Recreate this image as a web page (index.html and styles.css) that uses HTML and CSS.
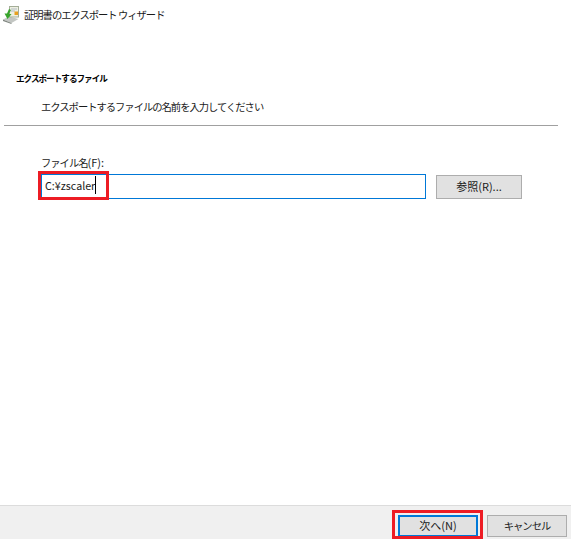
FILE: index.html
```html
<!DOCTYPE html>
<html lang="ja">
<head>
  <meta charset="UTF-8" />
  <title>証明書のエクスポート ウィザード</title>
  <link rel="stylesheet" href="styles.css">
</head>
<body>
  <div class="wizard">
    <div class="titlebar">
      <svg class="title-icon" width="16" height="18" viewBox="0 0 16 18">
        <path d="M0 13.5l6-3 9.5 2.500-7 4z" fill="#c3c6c3"/>
        <path d="M0 13.5l8.500 3.500v1L0 15z" fill="#7f857f"/>
        <rect x="6.5" y="0.5" width="9" height="10.5" fill="#eef0e2" stroke="#a4ad98"/>
        <path d="M8 3h6M8 5h4" stroke="#b4bcc4"/>
        <rect x="11.5" y="5.5" width="3.5" height="3.5" fill="#e8a020"/>
        <path d="M6 3l2 1-2 4h2.500l-4 5-3-5.500h2.500z" fill="#38a52c"/>
      </svg>
      <span>証明書のエクスポート ウィザード</span>
    </div>

    <div class="head">
      <div class="head-title">エクスポートするファイル</div>
      <div class="head-sub">エクスポートするファイルの名前を入力してください</div>
    </div>

    <div class="content">
      <label class="file-label">ファイル名<span class="latin">(F):</span></label>
      <div class="file-row">
        <div class="file-input">
          <span class="file-value">C:¥zscaler</span><span class="caret"></span>
          <div class="mark mark-input"></div>
        </div>
        <button class="btn btn-browse" type="button">参照(R)...</button>
      </div>
    </div>

    <div class="footer">
      <div class="next-wrap">
        <button class="btn btn-next" type="button">次へ(N)</button>
        <div class="mark mark-next"></div>
      </div>
      <button class="btn btn-cancel" type="button">キャンセル</button>
    </div>
  </div>
</body>
</html>
```

FILE: styles.css
```css
* {
  box-sizing: border-box;
}
body {
  margin: 0;
  background: #fff;
  font-family: "Noto Sans CJK JP", "Liberation Sans", sans-serif;
  font-size: 10.3px;
  letter-spacing: -1px;
  color: #1a1a1a;
}
.wizard {
  width: 571px;
  height: 539px;
  display: flex;
  flex-direction: column;
  overflow: hidden;
}
.titlebar {
  height: 30px;
  padding: 0 0 1px 3px;
  display: flex;
  align-items: center;
  gap: 5px;
}
.title-icon {
  flex: none;
}
.head {
  height: 96px;
  margin: 0 13px 0 4px;
  border-bottom: 1px solid #a0a0a0;
}
.head-title {
  padding: 41px 0 0 12px;
  font-size: 8.6px;
  line-height: 14px;
  font-weight: 700;
  color: #000;
}
.head-sub {
  padding: 14px 0 0 37px;
  line-height: 16px;
}
.content {
  flex: 1;
  padding: 28px 49px 0 41px;
}
.file-label {
  display: block;
  line-height: 16px;
}
.latin {
  font-size: 11px;
  letter-spacing: 0;
}
.file-row {
  display: flex;
  align-items: center;
  gap: 10px;
  margin-top: 3px;
}
.file-input {
  position: relative;
  width: 385px;
  height: 25px;
  border: 1px solid #0078d7;
  padding: 0 0 3px 3px;
  display: flex;
  align-items: center;
  font-size: 10.7px;
  letter-spacing: 0;
}
.caret {
  width: 1px;
  height: 18px;
  background: #000;
}
.mark {
  position: absolute;
  border: 3px solid #ed1c24;
}
.mark-input {
  left: -4px;
  top: -4px;
  width: 71px;
  height: 29px;
}
.btn {
  font-family: inherit;
  font-size: 11px;
  color: #1a1a1a;
  background: #e1e1e1;
  border: 1px solid #adadad;
  padding: 0 0 2px;
  height: 24px;
}
.btn-browse {
  width: 86px;
}
.footer {
  height: 34px;
  flex: none;
  background: #f0f0f0;
  border-top: 1px solid #dcdcdc;
  padding: 9px 4px 0 0;
  display: flex;
  justify-content: flex-end;
  align-items: flex-start;
  gap: 9px;
}
.next-wrap {
  position: relative;
}
.btn-next {
  display: block;
  width: 80px;
  height: 22px;
  border: 2px solid #0078d7;
}
.mark-next {
  left: -6px;
  top: -5px;
  width: 91px;
  height: 29px;
}
.btn-cancel {
  width: 80px;
  height: 22px;
  font-size: 10.3px;
  letter-spacing: -1px;
}
```
